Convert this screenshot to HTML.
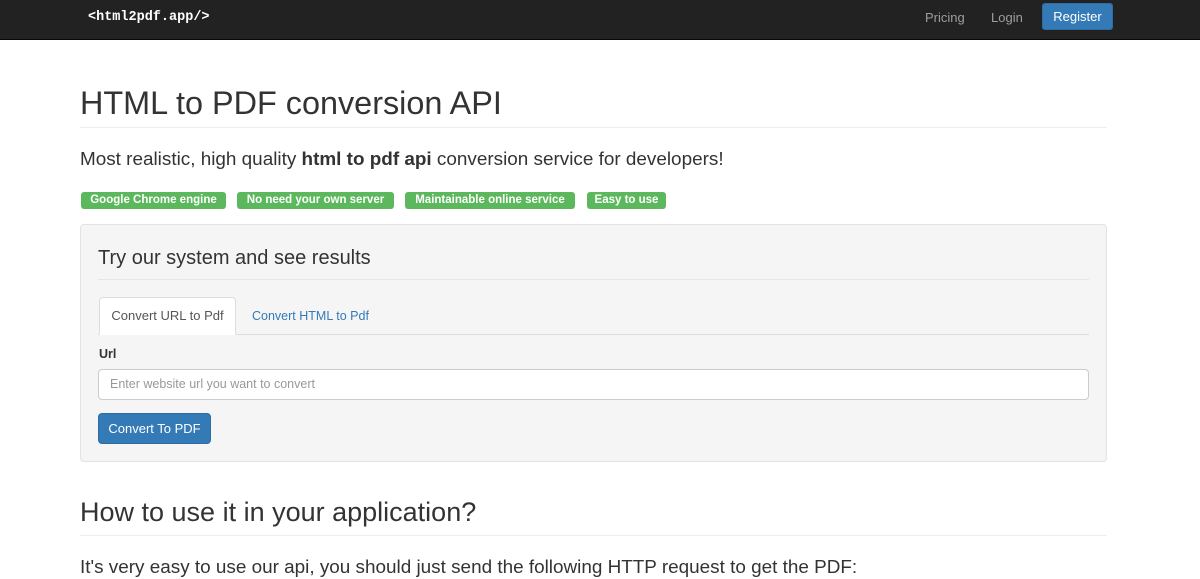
<!DOCTYPE html>
<html><head><meta charset="utf-8"><style>
*{box-sizing:border-box;margin:0;padding:0}
body{width:1200px;height:573px;overflow:hidden;background:#fff;font-family:"Liberation Sans",Arial,sans-serif;color:#333;font-size:14px;position:relative}
.nav{position:absolute;left:0;top:0;width:1200px;height:40px;background:#222;border-bottom:1px solid #080808}
.brand{position:absolute;left:88px;top:10px;color:#fff;font-family:"Liberation Mono","DejaVu Sans Mono",monospace;font-weight:bold;font-size:13.5px}
.nl{position:absolute;top:10px;color:#9d9d9d;font-size:13px}
.reg{position:absolute;left:1042px;top:3px;width:71px;height:27px;background:#337ab7;border:1px solid #2e6da4;border-radius:3px;color:#fff;font-size:13px;text-align:center;line-height:25px}
.a{position:absolute}
h1{position:absolute;left:80px;top:85px;font-size:32.4px;font-weight:normal;color:#333}
.hr{position:absolute;left:80px;width:1027px;height:1px;background:#eee}
.lbl{position:absolute;top:192px;height:17px;background:#5cb85c;color:#fff;font-weight:bold;font-size:11.5px;border-radius:3px;line-height:17px;text-align:center}
.well{position:absolute;left:80px;top:224px;width:1027px;height:238px;background:#f5f5f5;border:1px solid #e3e3e3;border-radius:4px}
</style></head><body>
<div class="nav"><div class="brand">&lt;html2pdf.app/&gt;</div>
<div class="nl" style="left:925px">Pricing</div><div class="nl" style="left:991px">Login</div>
<div class="reg">Register</div></div>
<h1>HTML to PDF conversion API</h1>
<div class="hr" style="top:127px"></div>
<div class="a" style="left:80px;top:149px;font-size:18.9px">Most realistic, high quality <b>html to pdf api</b> conversion service for developers!</div>
<div class="lbl" style="left:81px;width:145px">Google Chrome engine</div>
<div class="lbl" style="left:237px;width:157px">No need your own server</div>
<div class="lbl" style="left:405px;width:170px">Maintainable online service</div>
<div class="lbl" style="left:587px;width:79px">Easy to use</div>
<div class="well">
<div class="a" style="left:17px;top:22px;font-size:20px">Try our system and see results</div>
<div class="a" style="left:17px;top:54px;width:991px;height:1px;background:#e5e5e5"></div>
<div class="a" style="left:17px;top:109px;width:991px;height:1px;background:#ddd"></div>
<div class="a" style="left:18px;top:72px;width:137px;height:38px;background:#fff;border:1px solid #ddd;border-bottom-color:#fff;border-radius:4px 4px 0 0;text-align:center;line-height:36px;color:#555;font-size:13px">Convert URL to Pdf</div>
<div class="a" style="left:171px;top:84px;color:#337ab7;font-size:12.5px">Convert HTML to Pdf</div>
<div class="a" style="left:18px;top:122px;font-weight:bold;font-size:12.5px">Url</div>
<div class="a" style="left:17px;top:144px;width:991px;height:31px;background:#fff;border:1px solid #ccc;border-radius:4px;padding:7px 11px;color:#999;font-size:12.5px">Enter website url you want to convert</div>
<div class="a" style="left:17px;top:188px;width:113px;height:31px;background:#337ab7;border:1px solid #2e6da4;border-radius:4px;color:#fff;text-align:center;line-height:29px;font-size:13px">Convert To PDF</div>
</div>
<div class="a" style="left:80px;top:497px;font-size:27px">How to use it in your application?</div>
<div class="hr" style="top:535px"></div>
<div class="a" style="left:80px;top:557px;font-size:18.9px">It's very easy to use our api, you should just send the following HTTP request to get the PDF:</div>
</body></html>
